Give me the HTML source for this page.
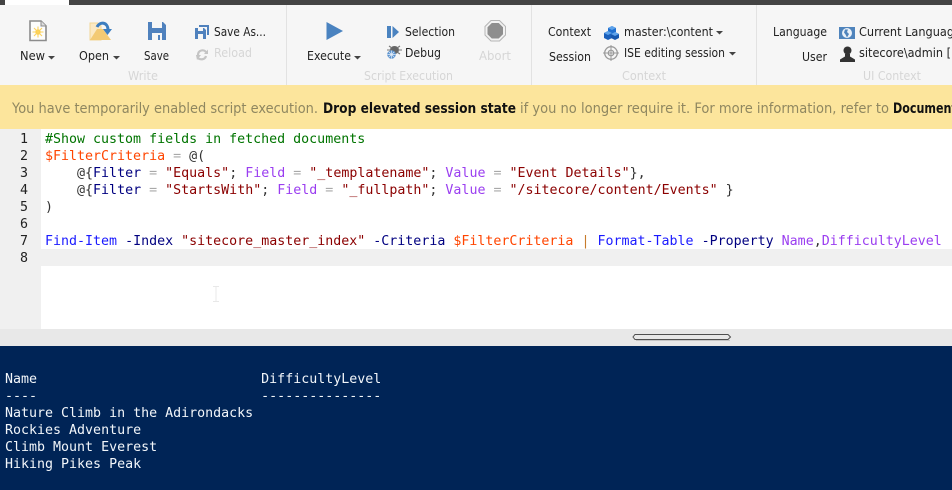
<!DOCTYPE html>
<html><head><meta charset="utf-8"><title>PowerShell ISE</title>
<style>
html,body{margin:0;padding:0;width:952px;height:490px;overflow:hidden;background:#fff}
svg{display:block}
text{white-space:pre}
.u{font-family:"DejaVu Sans","Liberation Sans",sans-serif;font-size:12px;fill:#222}
.g{font-family:"DejaVu Sans","Liberation Sans",sans-serif;font-size:12px;fill:#d6d6d6}
.b{font-family:"DejaVu Sans","Liberation Sans",sans-serif;font-size:14px;fill:#8f8760}
.bb{font-family:"DejaVu Sans","Liberation Sans",sans-serif;font-size:14px;font-weight:bold;fill:#111}
.c{font-family:"DejaVu Sans Mono","Liberation Mono",monospace;font-size:13.3px;fill:#111}
.n{font-family:"DejaVu Sans Mono","Liberation Mono",monospace;font-size:13.3px;fill:#222}
.o{font-family:"DejaVu Sans Mono","Liberation Mono",monospace;font-size:13.3px;fill:#f2f6fa}
.cm{fill:#007400}.v{fill:#ff4500}.op{fill:#a9a9a9}.s{fill:#8b0000}.a{fill:#9a3df0}.k{fill:#1a1aff}.d{fill:#000080}.p{fill:#333}
</style></head>
<body>
<svg width="952" height="490" viewBox="0 0 952 490" xmlns="http://www.w3.org/2000/svg">
<!-- ribbon -->
<rect width="952" height="85" fill="#f6f6f6"/>
<rect width="952" height="5" fill="#444"/>
<rect x="5" width="64" height="5" fill="#fff"/>
<rect x="286" y="5" width="1" height="80" fill="#e2e2e2"/>
<rect x="531" y="5" width="1" height="80" fill="#e2e2e2"/>
<rect x="756" y="5" width="1" height="80" fill="#e2e2e2"/>

<!-- New icon -->
<path d="M30 21H41L46 26V40.5H30Z" fill="#fdfdfd" stroke="#8c8c8c" stroke-width="1.6"/>
<path d="M41 21V26H46" fill="#ddd" stroke="#8c8c8c" stroke-width="1"/>
<circle cx="38" cy="32" r="2.6" fill="#fcc52f"/>
<path d="M38 26.5V37.5M32.5 32H43.5M34 28L42 36M42 28L34 36" stroke="#fcd35e" stroke-width="1.1"/>
<!-- Open icon -->
<path d="M90 40V23H98L101 26V40Z" fill="#fbe9c4" stroke="#f3d795" stroke-width="1"/>
<path d="M90 40L97 29H103L111 40Z" fill="#f3ca74"/>
<path d="M97 27C100 21 108 22 108 30" fill="none" stroke="#3c7ec0" stroke-width="3"/>
<path d="M103 29H112L107.500 35Z" fill="#3c7ec0"/>
<!-- Save icon -->
<path d="M148 22H163L166 25V40H148Z" fill="#4f81bd"/>
<rect x="152" y="22" width="10" height="6" fill="#f6f6f6"/>
<rect x="152" y="33" width="10" height="7" fill="#f6f6f6"/>
<rect x="158" y="35" width="2" height="5" fill="#4f81bd"/>
<!-- Save As icon -->
<path d="M199 25H209V35H207V27H199Z" fill="#4f81bd"/>
<path d="M195 28H204L206 30V39H195Z" fill="#4f81bd"/>
<rect x="198" y="28" width="5" height="3" fill="#f6f6f6"/>
<rect x="198" y="34" width="5" height="5" fill="#f6f6f6"/>
<!-- Reload icon -->
<path d="M198 55C198 50 204 49 206 52M206 56C205 60 200 60 198 58" fill="none" stroke="#c4c4c4" stroke-width="2.2"/>
<path d="M204 54H208V49.500ZM196 55H201L197 60Z" fill="#c4c4c4"/>
<!-- Execute -->
<path d="M326.500 22L343 31L326.500 40Z" fill="#4a83c0"/>
<!-- Selection -->
<rect x="387" y="26" width="4" height="12" fill="#4a83c0"/>
<path d="M392.500 26L399 32L392.500 38Z" fill="#4a83c0"/>
<!-- Debug -->
<ellipse cx="394.500" cy="50" rx="4.500" ry="4" fill="#666"/>
<path d="M389 46L392 48M400 46L397 48M387 50H391M402 50H398M389 54L392 52M400 54L397 52" stroke="#777" stroke-width="1.100"/>
<circle cx="391.500" cy="54.500" r="4.300" fill="#5b93cf"/>
<path d="M387.500 54.500H395.500M391.500 50.500V58.500M388.700 51.700L394.300 57.300M394.300 51.700L388.700 57.300" stroke="#e6eef7" stroke-width=".7"/>
<!-- Abort -->
<path d="M491 20.500H499.500L505.500 26.500V35L499.500 41H491L485 35V26.500Z" fill="#f2f2f2" stroke="#b5b5b5" stroke-width="1"/>
<path d="M491.800 23H498.700L503 27.300V34.200L498.700 38.500H491.800L487.500 34.200V27.300Z" fill="#8e8e8e"/>
<!-- Database cubes -->
<path d="M608 28L612 26L616 28V32L612 34L608 32Z" fill="#1f6fd0"/>
<path d="M604 33L608 31L612 33V38L608 40L604 38Z" fill="#1a5fbb"/>
<path d="M611 34L615 32L619 34V38L615 40L611 38Z" fill="#1657ae"/>
<path d="M608 28L612 26L616 28L612 30ZM604 33L608 31L612 33L608 35ZM611 34L615 32L619 34L615 36Z" fill="#5da2ea"/>
<!-- Target -->
<circle cx="611" cy="53" r="6.300" fill="none" stroke="#9a9a9a" stroke-width="1.300"/>
<circle cx="611" cy="53" r="2.800" fill="none" stroke="#9a9a9a" stroke-width="1.200"/>
<path d="M603 53H619M611 45V61" stroke="#9a9a9a" stroke-width="1"/>
<!-- Flag -->
<rect x="839" y="27" width="16" height="12" fill="#4f84bc"/>
<circle cx="847" cy="33" r="5" fill="#eaf1f8"/>
<path d="M845 29.500L848 29.500L847 32L849 34L847 37.500L845.500 34.500L844 32.500Z" fill="#4f84bc"/>
<!-- User -->
<circle cx="847.500" cy="50.500" r="4" fill="#333"/>
<path d="M840 62V59.500L845 56.500V54H850V56.500L855 59.500V62Z" fill="#333"/>

<!-- Ribbon labels -->
<text class="u" x="20" y="60" textLength="25" lengthAdjust="spacingAndGlyphs">New</text>
<path d="M48 56H55L51.500 59.500Z" fill="#444"/>
<text class="u" x="79" y="60" textLength="30" lengthAdjust="spacingAndGlyphs">Open</text>
<path d="M113 56H120L116.500 59.500Z" fill="#444"/>
<text class="u" x="144" y="60" textLength="25" lengthAdjust="spacingAndGlyphs">Save</text>
<text class="u" x="214" y="36" textLength="52" lengthAdjust="spacingAndGlyphs">Save As...</text>
<text class="g" x="214" y="57" textLength="38" lengthAdjust="spacingAndGlyphs">Reload</text>
<text class="g" x="128" y="80" textLength="30" lengthAdjust="spacingAndGlyphs">Write</text>
<text class="u" x="307" y="60" textLength="44" lengthAdjust="spacingAndGlyphs">Execute</text>
<path d="M354 56H361L357.500 59.500Z" fill="#444"/>
<text class="u" x="405" y="36" textLength="50" lengthAdjust="spacingAndGlyphs">Selection</text>
<text class="u" x="405" y="57" textLength="36" lengthAdjust="spacingAndGlyphs">Debug</text>
<text class="g" x="479" y="60" textLength="32" lengthAdjust="spacingAndGlyphs">Abort</text>
<text class="g" x="364" y="80" textLength="89" lengthAdjust="spacingAndGlyphs">Script Execution</text>
<text class="u" x="548" y="36" textLength="43" lengthAdjust="spacingAndGlyphs">Context</text>
<text class="u" x="624" y="36" textLength="89" lengthAdjust="spacingAndGlyphs">master:\content</text>
<path d="M716 31H723L719.500 34.500Z" fill="#444"/>
<text class="u" x="549" y="61" textLength="42" lengthAdjust="spacingAndGlyphs">Session</text>
<text class="u" x="624" y="57" textLength="101" lengthAdjust="spacingAndGlyphs">ISE editing session</text>
<path d="M729 52H736L732.500 55.500Z" fill="#444"/>
<text class="g" x="622" y="80" textLength="44" lengthAdjust="spacingAndGlyphs">Context</text>
<text class="u" x="773" y="36" textLength="54" lengthAdjust="spacingAndGlyphs">Language</text>
<text class="u" x="802" y="61" textLength="25" lengthAdjust="spacingAndGlyphs">User</text>
<text class="u" x="859" y="36" textLength="102" lengthAdjust="spacingAndGlyphs">Current Language</text>
<text class="u" x="859" y="57" textLength="92" lengthAdjust="spacingAndGlyphs">sitecore\admin [</text>
<text class="g" x="863" y="80" textLength="58" lengthAdjust="spacingAndGlyphs">UI Context</text>

<!-- Banner -->
<rect y="85" width="952" height="44" fill="#fce59c"/>
<text class="b" x="12" y="113" textLength="306" lengthAdjust="spacingAndGlyphs">You have temporarily enabled script execution.</text>
<text class="bb" x="323" y="113" textLength="193" lengthAdjust="spacingAndGlyphs">Drop elevated session state</text>
<text class="b" x="520" y="113" textLength="369" lengthAdjust="spacingAndGlyphs">if you no longer require it. For more information, refer to</text>
<text class="bb" x="893" y="113" textLength="96" lengthAdjust="spacingAndGlyphs">Documentation</text>

<!-- Editor -->
<rect y="129" width="41" height="200" fill="#f0f0f0"/>
<rect x="41" y="249" width="911" height="17" fill="#f0f0f0"/>
<text class="n" x="20" y="143">1</text>
<text class="n" x="20" y="160">2</text>
<text class="n" x="20" y="177">3</text>
<text class="n" x="20" y="194">4</text>
<text class="n" x="20" y="211">5</text>
<text class="n" x="20" y="228">6</text>
<text class="n" x="20" y="245">7</text>
<text class="n" x="20" y="262">8</text>

<text class="c" x="45" y="143"><tspan class="cm">#Show custom fields in fetched documents</tspan></text>
<text class="c" x="45" y="160"><tspan class="v">$FilterCriteria</tspan> <tspan class="op">=</tspan> <tspan class="p">@(</tspan></text>
<text class="c" x="45" y="177">    <tspan class="p">@{</tspan><tspan class="d">Filter</tspan> <tspan class="op">=</tspan> <tspan class="s">"Equals"</tspan><tspan class="p">;</tspan> <tspan class="a">Field</tspan> <tspan class="op">=</tspan> <tspan class="s">"_templatename"</tspan><tspan class="p">;</tspan> <tspan class="a">Value</tspan> <tspan class="op">=</tspan> <tspan class="s">"Event Details"</tspan><tspan class="p">},</tspan></text>
<text class="c" x="45" y="194">    <tspan class="p">@{</tspan><tspan class="d">Filter</tspan> <tspan class="op">=</tspan> <tspan class="s">"StartsWith"</tspan><tspan class="p">;</tspan> <tspan class="a">Field</tspan> <tspan class="op">=</tspan> <tspan class="s">"_fullpath"</tspan><tspan class="p">;</tspan> <tspan class="a">Value</tspan> <tspan class="op">=</tspan> <tspan class="s">"/sitecore/content/Events"</tspan> <tspan class="p">}</tspan></text>
<text class="c" x="45" y="211"><tspan class="p">)</tspan></text>
<text class="c" x="45" y="245"><tspan class="k">Find-Item</tspan> <tspan class="d">-Index</tspan> <tspan class="s">"sitecore_master_index"</tspan> <tspan class="d">-Criteria</tspan> <tspan class="v">$FilterCriteria</tspan> <tspan fill="#c77b2c">|</tspan> <tspan class="k">Format-Table</tspan> <tspan class="d">-Property</tspan> <tspan class="a">Name</tspan><tspan class="p">,</tspan><tspan class="a">DifficultyLevel</tspan></text>

<!-- I-beam -->
<path d="M213 286.500H219M216 286.500V301.500M213 301.500H219" stroke="#e8e8e8" stroke-width="1" fill="none"/>

<!-- Scrollbar -->
<rect y="329" width="952" height="17" fill="#e8e8e8"/>
<path d="M635 334.500H728L730.500 337L728 339.500H635L633 337Z" fill="#e8e8e8" stroke="#505050" stroke-width="1"/>
<path d="M636 340.500H730" stroke="#c4c4c4" stroke-width="1"/>

<!-- Output -->
<rect y="346" width="952" height="144" fill="#002456"/>
<text class="o" x="5" y="383">Name                            DifficultyLevel</text>
<text class="o" x="5" y="400">----                            ---------------</text>
<text class="o" x="5" y="417">Nature Climb in the Adirondacks</text>
<text class="o" x="5" y="434">Rockies Adventure</text>
<text class="o" x="5" y="451">Climb Mount Everest</text>
<text class="o" x="5" y="468">Hiking Pikes Peak</text>
</svg>
</body></html>
